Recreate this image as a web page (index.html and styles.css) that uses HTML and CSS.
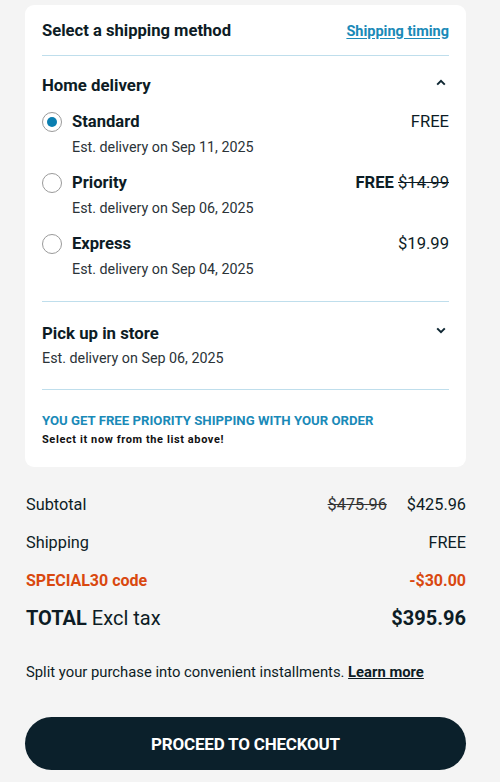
FILE: index.html
```html
<!DOCTYPE html>
<html lang="en">
<head>
<meta charset="utf-8">
<title>Checkout</title>
<link rel="stylesheet" href="styles.css">
</head>
<body>
<div class="page">
  <section class="card">
    <div class="card-head">
      <h2 class="card-title">Select a shipping method</h2>
      <a class="link-timing" href="#">Shipping timing</a>
    </div>

    <div class="group group-home">
      <div class="group-head">
        <span class="group-title">Home delivery</span>
        <svg class="chev" width="10" height="7" viewBox="0 0 10 7"><path d="M1.2 5.6 L5 1.8 L8.8 5.6" fill="none" stroke="#0f2733" stroke-width="2"/></svg>
      </div>
      <ul class="options">
        <li class="option">
          <span class="radio checked"></span>
          <div class="opt-body">
            <div class="opt-line">
              <span class="opt-name">Standard</span>
              <span class="opt-price">FREE</span>
            </div>
            <div class="opt-est">Est. delivery on Sep 11, 2025</div>
          </div>
        </li>
        <li class="option">
          <span class="radio"></span>
          <div class="opt-body">
            <div class="opt-line">
              <span class="opt-name">Priority</span>
              <span class="opt-price"><b>FREE</b> <s>$14.99</s></span>
            </div>
            <div class="opt-est">Est. delivery on Sep 06, 2025</div>
          </div>
        </li>
        <li class="option">
          <span class="radio"></span>
          <div class="opt-body">
            <div class="opt-line">
              <span class="opt-name">Express</span>
              <span class="opt-price">$19.99</span>
            </div>
            <div class="opt-est">Est. delivery on Sep 04, 2025</div>
          </div>
        </li>
      </ul>
    </div>

    <div class="group group-store">
      <div class="group-head">
        <span class="group-title">Pick up in store</span>
        <svg class="chev" width="10" height="7" viewBox="0 0 10 7"><path d="M1.2 1.4 L5 5.2 L8.8 1.4" fill="none" stroke="#0f2733" stroke-width="2"/></svg>
      </div>
      <div class="opt-est store-est">Est. delivery on Sep 06, 2025</div>
    </div>

    <div class="promo">
      <div class="promo-title">YOU GET FREE PRIORITY SHIPPING WITH YOUR ORDER</div>
      <div class="promo-sub">Select it now from the list above!</div>
    </div>
  </section>

  <section class="summary">
    <div class="row">
      <span>Subtotal</span>
      <span class="vals"><s class="old">$475.96</s><span>$425.96</span></span>
    </div>
    <div class="row">
      <span>Shipping</span>
      <span>FREE</span>
    </div>
    <div class="row row-promo">
      <span>SPECIAL30 code</span>
      <span>-$30.00</span>
    </div>
    <div class="row row-total">
      <span><b>TOTAL</b> Excl tax</span>
      <b>$395.96</b>
    </div>
  </section>

  <p class="split">Split your purchase into convenient installments. <a href="#">Learn more</a></p>

  <button class="checkout" type="button">PROCEED TO CHECKOUT</button>
</div>
</body>
</html>
```

FILE: styles.css
```css
* { box-sizing: border-box; }
html, body { margin: 0; padding: 0; }
body {
  background: #f4f4f4;
  font-family: Roboto, "Liberation Sans", sans-serif;
  color: #0d1c25;
  width: 500px;
  height: 782px;
  overflow: hidden;
}
.page {
  padding: 5px 34px 0 25px;
}
.card {
  background: #fff;
  border-radius: 9px;
  padding: 0 17px 20px;
}
.card-head {
  display: flex;
  justify-content: space-between;
  align-items: center;
  padding: 15px 0 13px;
  border-bottom: 1px solid #bfdeec;
}
.card-title {
  margin: 0;
  font-size: 16.6px;
  line-height: 22px;
  font-weight: 700;
}
.link-timing {
  font-size: 14.5px;
  font-weight: 700;
  color: #1a8ab8;
  text-decoration: underline;
  text-underline-offset: 2px;
}
.group {
  border-bottom: 1px solid #bfdeec;
}
.group-home { padding: 18px 0 23px; }
.group-store { padding: 20px 0 22px; }
.group-head {
  display: flex;
  justify-content: space-between;
  align-items: center;
  height: 22px;
}
.group-title {
  font-size: 16.8px;
  font-weight: 700;
  line-height: 22px;
}
.chev { margin-right: 3px; margin-top: -5px; }
.options {
  list-style: none;
  margin: 15px 0 0;
  padding: 0;
  display: flex;
  flex-direction: column;
  gap: 16px;
}
.option {
  display: flex;
  gap: 10px;
  align-items: flex-start;
}
.radio {
  flex: none;
  width: 20px;
  height: 20px;
  margin-top: 1px;
  border-radius: 50%;
  border: 1.5px solid #9a9a9a;
  background: #fff;
  position: relative;
}
.radio.checked::after {
  content: "";
  position: absolute;
  left: 3.5px;
  top: 3.5px;
  width: 10px;
  height: 10px;
  border-radius: 50%;
  background: #0a7eb0;
}
.opt-body { flex: 1; }
.opt-line {
  display: flex;
  justify-content: space-between;
  align-items: baseline;
  line-height: 22px;
}
.opt-name { font-size: 16.6px; font-weight: 700; }
.opt-price { font-size: 16.6px; }
.opt-price b { font-weight: 700; }
.opt-price s { font-weight: 400; }
.opt-est {
  margin-top: 5px;
  font-size: 14.3px;
  line-height: 18px;
  color: #2b3338;
}
.promo { padding-top: 23px; }
.promo-title {
  font-size: 13.2px;
  line-height: 16px;
  font-weight: 700;
  color: #1a8ab8;
}
.promo-sub {
  margin-top: 4px;
  font-size: 11px;
  line-height: 14px;
  font-weight: 700;
  color: #111;
  letter-spacing: 0.6px;
}
.summary {
  margin-top: 18px;
}
.row {
  height: 38px;
  display: flex;
  justify-content: space-between;
  align-items: center;
  font-size: 16.3px;
  padding-left: 1px;
}
.vals { display: flex; gap: 20px; }
.old { color: #333; }
.row-promo { color: #d9480f; font-weight: 700; font-size: 16px; }
.row-total { font-size: 20px; }
.row-total b { font-weight: 700; }
.split {
  margin: 26px 0 0;
  font-size: 14.8px;
  line-height: 18px;
  padding-left: 1px;
}
.split a {
  color: #0d1c25;
  font-weight: 700;
  text-decoration: underline;
}
.checkout {
  display: block;
  width: 100%;
  height: 53px;
  margin-top: 36px;
  border: 0;
  border-radius: 27px;
  background: #0b202b;
  color: #fff;
  font-family: Roboto, "Liberation Sans", sans-serif;
  font-size: 17px;
  font-weight: 700;
  letter-spacing: -0.2px;
}
```
